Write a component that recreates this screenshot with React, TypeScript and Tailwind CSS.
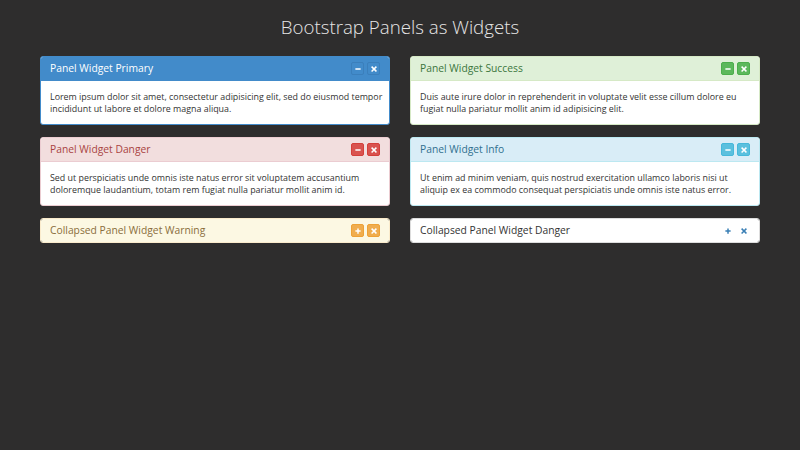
type Variant = "primary" | "success" | "danger" | "info" | "warning" | "plain";

const styles: Record<Variant, { panel: string; head: string; btn: string; icon: string }> = {
  primary: {
    panel: "border-[#428bca]",
    head: "bg-[#428bca] text-white border-[#428bca]",
    btn: "bg-[#428bca] border border-[#3b7fbb]",
    icon: "#ffffff",
  },
  success: {
    panel: "border-[#d6e9c6]",
    head: "bg-[#dff0d8] text-[#3c763d] border-[#d6e9c6]",
    btn: "bg-[#5cb85c] border border-[#4cae4c]",
    icon: "#ffffff",
  },
  danger: {
    panel: "border-[#ebccd1]",
    head: "bg-[#f2dede] text-[#a94442] border-[#ebccd1]",
    btn: "bg-[#d9534f] border border-[#d43f3a]",
    icon: "#ffffff",
  },
  info: {
    panel: "border-[#bce8f1]",
    head: "bg-[#d9edf7] text-[#31708f] border-[#bce8f1]",
    btn: "bg-[#5bc0de] border border-[#46b8da]",
    icon: "#ffffff",
  },
  warning: {
    panel: "border-[#faebcc]",
    head: "bg-[#fcf8e3] text-[#8a6d3b] border-[#faebcc]",
    btn: "bg-[#f0ad4e] border border-[#eea236]",
    icon: "#ffffff",
  },
  plain: {
    panel: "border-[#dddddd]",
    head: "bg-white text-[#333333] border-[#dddddd]",
    btn: "bg-transparent",
    icon: "#3a7fb5",
  },
};

function Glyph({ kind, color }: { kind: "minus" | "plus" | "remove"; color: string }) {
  return (
    <svg width="6" height="6" viewBox="0 0 8 8">
      {kind === "minus" && <rect x="0.5" y="3" width="7" height="2" fill={color} />}
      {kind === "plus" && (
        <path d="M3 0.5h2v2.5h2.5v2H5v2.5H3V5H0.5V3H3z" fill={color} />
      )}
      {kind === "remove" && (
        <path d="M1.5 1.5l5 5M6.5 1.5l-5 5" stroke={color} strokeWidth="2" strokeLinecap="square" />
      )}
    </svg>
  );
}

type PanelProps = {
  variant: Variant;
  title: string;
  lines?: string[];
  collapsed?: boolean;
};

function Panel({ variant, title, lines, collapsed }: PanelProps) {
  const s = styles[variant];
  return (
    <div className={`overflow-hidden rounded-[3px] border bg-white ${s.panel}`}>
      <div
        className={`flex items-center justify-between px-[9px] ${s.head} ${
          collapsed ? "h-[23px]" : "h-[24px] border-b"
        }`}
      >
        <span className="text-[10.3px]">{title}</span>
        <div className="flex gap-[3px]">
          <span className={`flex h-[13px] w-[13px] items-center justify-center rounded-[2px] ${s.btn}`}>
            <Glyph kind={collapsed ? "plus" : "minus"} color={s.icon} />
          </span>
          <span className={`flex h-[13px] w-[13px] items-center justify-center rounded-[2px] ${s.btn}`}>
            <Glyph kind="remove" color={s.icon} />
          </span>
        </div>
      </div>
      {!collapsed && lines && (
        <div className="pb-[9px] pl-[9px] pr-[2px] pt-[10px] text-[8.9px] leading-[12px] text-[#333333]">
          {lines.map((line) => (
            <p key={line} className="whitespace-nowrap">
              {line}
            </p>
          ))}
        </div>
      )}
    </div>
  );
}

export default function App() {
  return (
    <div
      className="h-[450px] w-[800px] bg-[#2e2d2d]"
      style={{ fontFamily: '"Open Sans", "Noto Sans", sans-serif' }}
    >
      <h1 className="pt-[13px] text-center text-[18.7px] font-light leading-[28px] text-[#e6e6e6]">
        Bootstrap Panels as Widgets
      </h1>
      <div className="mt-[15px] grid grid-cols-2 items-start gap-x-5 gap-y-[12px] px-10">
        <Panel
          variant="primary"
          title="Panel Widget Primary"
          lines={[
            "Lorem ipsum dolor sit amet, consectetur adipisicing elit, sed do eiusmod tempor",
            "incididunt ut labore et dolore magna aliqua.",
          ]}
        />
        <Panel
          variant="success"
          title="Panel Widget Success"
          lines={[
            "Duis aute irure dolor in reprehenderit in voluptate velit esse cillum dolore eu",
            "fugiat nulla pariatur mollit anim id adipisicing elit.",
          ]}
        />
        <Panel
          variant="danger"
          title="Panel Widget Danger"
          lines={[
            "Sed ut perspiciatis unde omnis iste natus error sit voluptatem accusantium",
            "doloremque laudantium, totam rem fugiat nulla pariatur mollit anim id.",
          ]}
        />
        <Panel
          variant="info"
          title="Panel Widget Info"
          lines={[
            "Ut enim ad minim veniam, quis nostrud exercitation ullamco laboris nisi ut",
            "aliquip ex ea commodo consequat perspiciatis unde omnis iste natus error.",
          ]}
        />
        <Panel variant="warning" title="Collapsed Panel Widget Warning" collapsed />
        <Panel variant="plain" title="Collapsed Panel Widget Danger" collapsed />
      </div>
    </div>
  );
}
